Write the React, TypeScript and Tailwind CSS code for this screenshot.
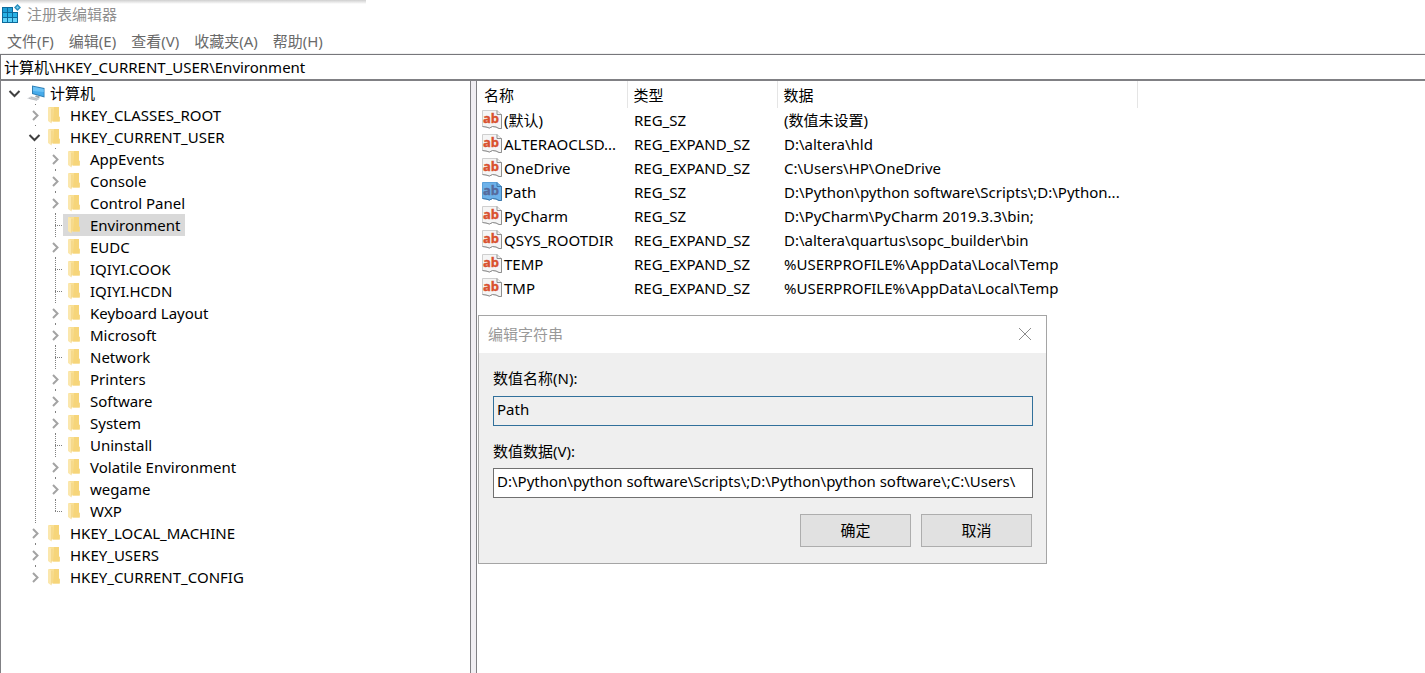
type NodeState = 'open' | 'closed' | 'leaf'

type TreeNode = {
    name: string
    level: number
    state: NodeState
    selected?: boolean
}

const tree: TreeNode[] = [
    { name: '计算机', level: 0, state: 'open' },
    { name: 'HKEY_CLASSES_ROOT', level: 1, state: 'closed' },
    { name: 'HKEY_CURRENT_USER', level: 1, state: 'open' },
    { name: 'AppEvents', level: 2, state: 'closed' },
    { name: 'Console', level: 2, state: 'closed' },
    { name: 'Control Panel', level: 2, state: 'closed' },
    { name: 'Environment', level: 2, state: 'leaf', selected: true },
    { name: 'EUDC', level: 2, state: 'closed' },
    { name: 'IQIYI.COOK', level: 2, state: 'leaf' },
    { name: 'IQIYI.HCDN', level: 2, state: 'leaf' },
    { name: 'Keyboard Layout', level: 2, state: 'closed' },
    { name: 'Microsoft', level: 2, state: 'closed' },
    { name: 'Network', level: 2, state: 'leaf' },
    { name: 'Printers', level: 2, state: 'closed' },
    { name: 'Software', level: 2, state: 'closed' },
    { name: 'System', level: 2, state: 'closed' },
    { name: 'Uninstall', level: 2, state: 'leaf' },
    { name: 'Volatile Environment', level: 2, state: 'closed' },
    { name: 'wegame', level: 2, state: 'closed' },
    { name: 'WXP', level: 2, state: 'leaf' },
    { name: 'HKEY_LOCAL_MACHINE', level: 1, state: 'closed' },
    { name: 'HKEY_USERS', level: 1, state: 'closed' },
    { name: 'HKEY_CURRENT_CONFIG', level: 1, state: 'closed' },
]

const values = [
    { name: '(默认)', type: 'REG_SZ', data: '(数值未设置)' },
    { name: 'ALTERAOCLSD...', type: 'REG_EXPAND_SZ', data: 'D:\\altera\\hld' },
    { name: 'OneDrive', type: 'REG_EXPAND_SZ', data: 'C:\\Users\\HP\\OneDrive' },
    { name: 'Path', type: 'REG_SZ', data: 'D:\\Python\\python software\\Scripts\\;D:\\Python...', selected: true },
    { name: 'PyCharm', type: 'REG_SZ', data: 'D:\\PyCharm\\PyCharm 2019.3.3\\bin;' },
    { name: 'QSYS_ROOTDIR', type: 'REG_EXPAND_SZ', data: 'D:\\altera\\quartus\\sopc_builder\\bin' },
    { name: 'TEMP', type: 'REG_EXPAND_SZ', data: '%USERPROFILE%\\AppData\\Local\\Temp' },
    { name: 'TMP', type: 'REG_EXPAND_SZ', data: '%USERPROFILE%\\AppData\\Local\\Temp' },
]

const menus = ['文件(F)', '编辑(E)', '查看(V)', '收藏夹(A)', '帮助(H)']

function AppIcon() {
    return (
        <svg width="19" height="20" viewBox="0 0 19 20" aria-hidden="true">
            <path d="M0 3H11V8H16V19H0Z" fill="#0b6a9c" />
            <path d="M1 4H5V8H1ZM6 4H10V8H6Z" fill="#1f9fd6" />
            <path d="M1 9H5V13H1ZM6 9H10V13H6ZM11 9H15V13H11Z" fill="#28b2e6" />
            <path d="M1 14H5V18H1ZM6 14H10V18H6ZM11 14H15V18H11Z" fill="#5fd2f8" />
            <path d="M15.500 0L19 3.500L15.500 7L12 3.500Z" fill="#2b8fbd" />
            <path d="M15.500 2L17 3.500L15.500 5L14 3.500Z" fill="#7fd0ee" />
        </svg>
    )
}

function ComputerIcon() {
    return (
        <svg width="19" height="16" viewBox="0 0 19 16" aria-hidden="true">
            <path d="M5 0.500L17.500 3V12.500L5 9Z" fill="#2f7fb5" />
            <path d="M6 1.700L16.700 3.900V11.300L6 8.300Z" fill="#46abeb" />
            <path d="M6 1.700L16.700 3.900V7L6 6Z" fill="#6cc2f5" />
            <path d="M9 10.200L13 11.400L12 13.300L8 12Z" fill="#9aa3aa" />
            <path d="M0 13.500L4 11.200L13 13.600L9.500 15.800Z" fill="#d3d6d9" />
            <path d="M2 13.300L10 15.200M4 12.300L11.500 14.300" stroke="#a9adb1" strokeWidth="0.600" />
        </svg>
    )
}

function FolderIcon() {
    return (
        <svg width="14" height="18" viewBox="0 0 14 18" aria-hidden="true">
            <path d="M2 1H12V10.500L12.700 11V15.500H4Z" fill="#f9df93" />
            <path d="M7 1H12V10.500L12.700 11V15.500H6Z" fill="#f6d57a" />
            <path d="M1 1L4.500 2.500V17.500L1 15Z" fill="#fbe7ad" />
            <path d="M4.500 2.500L5.300 3.500V14L4.500 17.500Z" fill="#f0cf7a" />
        </svg>
    )
}

function StringIcon({ selected }: { selected?: boolean }) {
    return (
        <svg width="20" height="20" viewBox="0 0 20 20" className="shrink-0" aria-hidden="true">
            <path
                d="M0.500 0.500H15L19.500 4.500V18.500H17L14 17L10.500 16.500L7.500 18L4 17L0.500 16.500Z"
                fill={selected ? '#6db2ea' : '#f5f5f5'}
                stroke={selected ? '#5a9fd8' : '#cfcfcf'}
            />
            <path
                d="M15 0.500V4.500H19.500M19.500 4.500V18.500H17L14 17L10.500 16.500L7.500 18L4 17L0.500 16.500"
                fill="none"
                stroke={selected ? '#3f78ab' : '#8f8f8f'}
            />
            <text
                x="9"
                y="13"
                textAnchor="middle"
                fontSize="13"
                fontWeight="700"
                fontFamily="'Open Sans', sans-serif"
                fill={selected ? '#566a9c' : '#d9512f'}
                stroke={selected ? '#566a9c' : '#d9512f'}
                strokeWidth="0.400"
            >
                ab
            </text>
        </svg>
    )
}

// connector cell in front of a node: dotted line, elbow or expand arrow
function Guide({ state, last }: { state: NodeState | 'line'; last?: boolean }) {
    return (
        <svg
            width={state === 'line' ? 20 : 18}
            height="22"
            className="shrink-0"
            fill="none"
            aria-hidden="true"
        >
            {state === 'line' && (
                <path d="M10.500 0V22" stroke="#808080" strokeDasharray="1 1" shapeRendering="crispEdges" />
            )}
            {state === 'leaf' && (
                <path
                    d={last ? 'M10.500 0V12M10 11.500H18' : 'M10.500 0V22M10 11.500H18'}
                    stroke="#808080"
                    strokeDasharray="1 1"
                    shapeRendering="crispEdges"
                />
            )}
            {state === 'closed' && (
                <>
                    <path
                        d={last ? 'M10.500 0V1' : 'M10.500 0V1M10.500 21V22'}
                        stroke="#808080"
                        shapeRendering="crispEdges"
                    />
                    <path d="M8 7L12.500 11.500L8 16" stroke="#a3a3a3" strokeWidth="2" />
                </>
            )}
            {state === 'open' && <path d="M4.500 9L9.500 14L14.500 9" stroke="#404040" strokeWidth="2" />}
        </svg>
    )
}

function TreeRow({ node, last }: { node: TreeNode; last: boolean }) {
    return (
        <li className="flex h-[22px]">
            {node.level > 0 && <span className="w-5 shrink-0" />}
            {node.level > 1 && <Guide state="line" />}
            <Guide state={node.state} last={last} />
            <button
                className={`flex items-center whitespace-nowrap px-1 ${node.selected ? 'bg-[#d9d9d9]' : ''}`}
            >
                <span className="w-[23px] shrink-0">
                    {node.level === 0 ? <ComputerIcon /> : <FolderIcon />}
                </span>
                <span>{node.name}</span>
            </button>
        </li>
    )
}

function EditDialog() {
    return (
        <div
            role="dialog"
            aria-labelledby="dialog-title"
            className="absolute left-px top-[234px] w-[569px] border border-[#a5a5a5] bg-[#efefef]"
        >
            <div className="flex h-[37px] items-center justify-between bg-white pb-[2px] pl-[9px] pr-[14px]">
                <h2 id="dialog-title" className="text-[#999999]">编辑字符串</h2>
                <button aria-label="关闭">
                    <svg width="14" height="14" fill="none" stroke="#8c8c8c" aria-hidden="true">
                        <path d="M1 1L13 13M13 1L1 13" />
                    </svg>
                </button>
            </div>
            <form className="flex flex-col pb-4 pl-[14px] pr-[13px] pt-[14px]">
                <label htmlFor="value-name">数值名称(N):</label>
                <input
                    id="value-name"
                    readOnly
                    defaultValue="Path"
                    className="mt-[7px] h-[30px] border border-[#31709b] bg-[#efefef] px-[3px] pb-1 outline-none"
                />
                <label htmlFor="value-data" className="mt-[14px]">数值数据(V):</label>
                <input
                    id="value-data"
                    defaultValue="D:\Python\python software\Scripts\;D:\Python\python software\;C:\Users\"
                    className="mt-[6px] h-[30px] border border-[#707070] bg-white px-[3px] pb-1 outline-none"
                />
                <div className="mt-4 flex justify-end gap-[10px] pr-px">
                    <button type="button" className="h-[33px] w-[111px] border border-[#adadad] bg-[#e1e1e1] pb-[2px]">
                        确定
                    </button>
                    <button type="button" className="h-[33px] w-[111px] border border-[#adadad] bg-[#e1e1e1] pb-[2px]">
                        取消
                    </button>
                </div>
            </form>
        </div>
    )
}

export default function App() {
    return (
        <div className="flex h-screen flex-col overflow-hidden bg-white font-['Noto_Sans','Noto_Sans_CJK_SC',sans-serif] text-[15px] leading-[22px] text-black">
            <header className="flex flex-col">
                <div className="h-1 w-[366px] bg-linear-to-b from-[#cfcfcf] to-white" />
                <div className="flex h-[22px] items-center gap-[6px] pb-[2px] pl-[2px]">
                    <AppIcon />
                    <h1 className="text-[#8f8f8f]">注册表编辑器</h1>
                </div>
                <nav className="flex h-7 items-center gap-[15px] border-b border-[#f0f0f0] pl-[7px] pt-[2px] text-[#6a6a6a]">
                    {menus.map((menu) => (
                        <button key={menu}>{menu}</button>
                    ))}
                </nav>
                <input
                    aria-label="地址"
                    defaultValue="计算机\HKEY_CURRENT_USER\Environment"
                    className="h-[25px] w-full border-l border-t border-[#77777b] pb-[2px] pl-[3px] outline-none"
                />
            </header>
            <main className="flex min-h-0 flex-1 border-t-2 border-[#808084] bg-[#f0eef2]">
                <aside className="w-[471px] shrink-0 border-x border-[#808084] bg-white">
                    <ul className="flex flex-col pl-1 pt-px">
                        {tree.map((node, i) => (
                            <TreeRow
                                key={node.name}
                                node={node}
                                last={!tree[i + 1] || tree[i + 1].level < node.level}
                            />
                        ))}
                    </ul>
                </aside>
                <section className="relative ml-[5px] min-w-0 flex-1 border-l border-[#808084] bg-white">
                    <table className="w-[660px] table-fixed border-collapse whitespace-nowrap text-left">
                        <colgroup>
                            <col className="w-[150px]" />
                            <col className="w-[150px]" />
                            <col className="w-[360px]" />
                        </colgroup>
                        <thead>
                            <tr className="h-[27px]">
                                <th className="border-r border-[#e5e5e5] p-0 pl-[7px] font-normal">名称</th>
                                <th className="border-r border-[#e5e5e5] p-0 pl-[6px] font-normal">类型</th>
                                <th className="border-r border-[#e5e5e5] p-0 pl-[6px] font-normal">数据</th>
                            </tr>
                        </thead>
                        <tbody>
                            {values.map((value) => (
                                <tr key={value.name} className="h-6">
                                    <td className="p-0 pl-[5px]">
                                        <div className="flex items-center gap-[2px]">
                                            <StringIcon selected={value.selected} />
                                            <span>{value.name}</span>
                                        </div>
                                    </td>
                                    <td className="p-0 pl-[7px]">{value.type}</td>
                                    <td className="p-0 pl-[7px]">{value.data}</td>
                                </tr>
                            ))}
                        </tbody>
                    </table>
                    <EditDialog />
                </section>
            </main>
        </div>
    )
}
